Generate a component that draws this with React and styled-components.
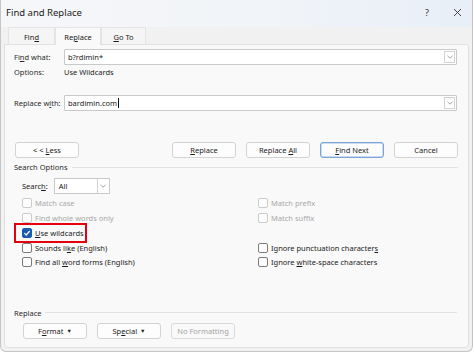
import React from 'react';
import styled, { createGlobalStyle, css } from 'styled-components';

const Global = createGlobalStyle`
  html, body { margin: 0; padding: 0; background: #ffffff; }
  body {
    width: 474px; height: 357px; overflow: hidden;
    font-family: "Noto Sans", "Open Sans", sans-serif;
    color: #1b1b1b;
  }
`;

const Window = styled.div`
  width: 473px;
  height: 352px;
  box-sizing: border-box;
  border: 1px solid #c6c6c6;
  border-top: none;
  border-radius: 0 0 6px 6px;
  background: #f1f1f1;
  display: flex;
  flex-direction: column;
  overflow: hidden;
`;

const TitleBar = styled.div`
  height: 27px;
  flex: none;
  display: flex;
  align-items: center;
  padding-left: 5px;
  background: linear-gradient(to right, #f6f7f9 0%, #f1f4f8 55%, #e8eff8 100%);
`;

const Title = styled.div`
  font-size: 9.5px;
  flex: 1;
  padding-bottom: 2px;
`;

const TitleBtn = styled.div`
  width: 30px;
  height: 24px;
  display: flex;
  align-items: center;
  justify-content: center;
  font-size: 9px;
  color: #333;
  padding-bottom: 3px;
`;

const TabStrip = styled.div`
  height: 17px;
  flex: none;
  display: flex;
  padding-left: 7px;
  background: #f1f1f1;
`;

const Tab = styled.div`
  width: ${p => p.w}px;
  box-sizing: border-box;
  text-align: center;
  line-height: 16px;
  font-size: 7.5px;
  padding-top: 1px;
  border: 1px solid #e4e4e4;
  border-bottom: none;
  background: ${p => (p.active ? '#f9f9f9' : '#f5f5f5')};
  margin-bottom: ${p => (p.active ? '-1px' : '0')};
  position: relative;
  z-index: ${p => (p.active ? 1 : 0)};
`;

const Panel = styled.div`
  flex: 1;
  margin: 0 3px 3px 3px;
  box-sizing: border-box;
  background: #f9f9f9;
  border: 1px solid #e0e0e0;
  border-radius: 0 3px 4px 4px;
  padding: 4px 11px 8px 9px;
  display: flex;
  flex-direction: column;
  font-size: 7.5px;
`;

const FieldRow = styled.div`
  display: flex;
  align-items: center;
  height: 16px;
  margin-top: ${p => p.mt || 0}px;
`;

const Label = styled.div`
  width: 50px;
  flex: none;
  color: #2a2a2a;
`;

const InfoRow = styled.div`
  display: flex;
  align-items: center;
  height: 14px;
`;

const Input = styled.div`
  flex: 1;
  height: 16px;
  box-sizing: border-box;
  border: 1px solid #c9c9c9;
  background: #fff;
  display: flex;
  align-items: center;
  padding-left: 3px;
  border-radius: 1px;
`;

const InputText = styled.span`
  flex: 1;
  display: flex;
  align-items: center;
`;

const Caret = styled.span`
  display: inline-block;
  width: 1px;
  height: 10px;
  background: #111;
  margin-left: 0.5px;
`;

const DropBtn = styled.div`
  width: 11px;
  height: 12px;
  box-sizing: border-box;
  border: 1px solid #d2d2d2;
  margin-right: 1px;
  display: flex;
  align-items: center;
  justify-content: center;
  background: #fff;
`;

const ButtonRow = styled.div`
  display: flex;
  justify-content: space-between;
  align-items: center;
  margin-top: ${p => p.mt || 0}px;
  margin-left: ${p => p.ml || 0}px;
  margin-right: ${p => p.mr || 0}px;
`;

const ButtonGroup = styled.div`
  display: flex;
  gap: ${p => p.gap || 10}px;
`;

const Button = styled.div`
  width: 64px;
  height: 16px;
  box-sizing: border-box;
  border: 1px solid #d3d3d3;
  border-radius: 3px;
  background: #fdfdfd;
  text-align: center;
  line-height: 14px;
  white-space: pre;
  color: #1b1b1b;
  ${p => p.primary && css`
    border-color: #7aa3d8;
    box-shadow: inset 0 0 0 0.5px #9dbbe3;
  `}
  ${p => p.disabled && css`
    color: #a3a3a3;
    border-color: #dadada;
    background: #f9f9f9;
  `}
`;

const SectionHeader = styled.div`
  display: flex;
  align-items: center;
  height: 14px;
  margin-top: ${p => p.mt || 0}px;
  margin-right: ${p => p.mr || 0}px;
  color: #2a2a2a;
  &::after {
    content: '';
    flex: 1;
    border-top: 1px solid #e2e2e2;
    margin-left: 4px;
  }
`;

const SearchRow = styled.div`
  display: flex;
  align-items: center;
  height: 16px;
  margin-top: 4px;
  margin-left: 8px;
`;

const Select = styled.div`
  width: 56px;
  height: 16px;
  box-sizing: border-box;
  border: 1px solid #c9c9c9;
  background: #fff;
  display: flex;
  align-items: stretch;
  margin-left: 6px;
`;

const SelectText = styled.div`
  flex: 1;
  display: flex;
  align-items: center;
  padding-left: 4px;
`;

const SelectArrow = styled.div`
  width: 11px;
  border-left: 1px solid #d2d2d2;
  display: flex;
  align-items: center;
  justify-content: center;
`;

const OptionsGrid = styled.div`
  display: grid;
  grid-template-columns: 236px 1fr;
  grid-auto-rows: 14.75px;
  margin-top: 2px;
  margin-left: 8px;
`;

const Check = styled.div`
  display: flex;
  align-items: center;
  gap: 3px;
  justify-self: start;
  grid-column: ${p => p.col};
  grid-row: ${p => p.row};
  color: ${p => (p.disabled ? '#a8a8a8' : '#1b1b1b')};
  ${p => p.highlight && css`
    margin: -3px -3px -3px -8px;
    padding: 1px 1px 1px 6px;
    border: 2px solid #e4000f;
  `}
`;

const Box = styled.span`
  width: 10px;
  height: 10px;
  box-sizing: border-box;
  border-radius: 2px;
  border: 1px solid ${p => (p.disabled ? '#cbcbcb' : '#7b7b7b')};
  background: ${p => (p.checked ? '#1a5cb3' : '#fdfdfd')};
  ${p => p.checked && css`border-color: #1a5cb3;`}
  display: flex;
  align-items: center;
  justify-content: center;
  flex: none;
`;

const U = styled.span`
  text-decoration: underline;
  text-underline-offset: 1px;
`;

const Tri = styled.span`
  font-size: 5.5px;
  margin-left: 3px;
  vertical-align: 1px;
`;

const Chevron = () => (
  <svg width="6" height="4" viewBox="0 0 6 4">
    <path d="M0.5 0.8 L3 3.2 L5.5 0.8" fill="none" stroke="#8a8a8a" strokeWidth="0.8" />
  </svg>
);

const CheckItem = ({ col, row, disabled, checked, highlight, children }) => (
  <Check col={col} row={row} disabled={disabled} highlight={highlight}>
    <Box disabled={disabled} checked={checked}>
      {checked && (
        <svg width="8" height="8" viewBox="0 0 8 8">
          <path d="M1.4 4.2 L3.2 6 L6.7 2" fill="none" stroke="#fff" strokeWidth="1.2" />
        </svg>
      )}
    </Box>
    <span>{children}</span>
  </Check>
);

export default function App() {
  return (
    <>
      <Global />
      <Window>
        <TitleBar>
          <Title>Find and Replace</Title>
          <TitleBtn>?</TitleBtn>
          <TitleBtn>
            <svg width="9" height="9" viewBox="0 0 9 9">
              <path d="M1 1 L8 8 M8 1 L1 8" stroke="#333" strokeWidth="0.9" />
            </svg>
          </TitleBtn>
        </TitleBar>
        <TabStrip>
          <Tab w={47}>Fin<U>d</U></Tab>
          <Tab w={46} active>Re<U>p</U>lace</Tab>
          <Tab w={45}><U>G</U>o To</Tab>
        </TabStrip>
        <Panel>
          <FieldRow>
            <Label>Fi<U>n</U>d what:</Label>
            <Input>
              <InputText>b?rdimin*</InputText>
              <DropBtn><Chevron /></DropBtn>
            </Input>
          </FieldRow>
          <InfoRow>
            <Label>Options:</Label>
            <span>Use Wildcards</span>
          </InfoRow>
          <FieldRow mt={16}>
            <Label>Replace w<U>i</U>th:</Label>
            <Input>
              <InputText>bardimin.com<Caret /></InputText>
              <DropBtn><Chevron /></DropBtn>
            </Input>
          </FieldRow>
          <ButtonRow mt={31} ml={1} mr={-1}>
            <Button>{'< < '}<U>L</U>ess</Button>
            <ButtonGroup gap={10}>
              <Button><U>R</U>eplace</Button>
              <Button>Replace <U>A</U>ll</Button>
              <Button primary><U>F</U>ind Next</Button>
              <Button>Cancel</Button>
            </ButtonGroup>
          </ButtonRow>
          <SectionHeader mt={2} mr={-1}>Search Options</SectionHeader>
          <SearchRow>
            <span>Searc<U>h</U>:</span>
            <Select>
              <SelectText>All</SelectText>
              <SelectArrow><Chevron /></SelectArrow>
            </Select>
          </SearchRow>
          <OptionsGrid>
            <CheckItem col={1} row={1} disabled>Match case</CheckItem>
            <CheckItem col={1} row={2} disabled>Find whole words only</CheckItem>
            <CheckItem col={1} row={3} checked highlight><U>U</U>se wildcards</CheckItem>
            <CheckItem col={1} row={4}>Sounds li<U>k</U>e (English)</CheckItem>
            <CheckItem col={1} row={5}>Find all <U>w</U>ord forms (English)</CheckItem>
            <CheckItem col={2} row={1} disabled>Match prefix</CheckItem>
            <CheckItem col={2} row={2} disabled>Match suffix</CheckItem>
            <CheckItem col={2} row={4}>Ignore punctuation character<U>s</U></CheckItem>
            <CheckItem col={2} row={5}>Ignore <U>w</U>hite-space characters</CheckItem>
          </OptionsGrid>
          <SectionHeader mt={36}>Replace</SectionHeader>
          <ButtonRow mt={3} ml={9}>
            <ButtonGroup gap={10}>
              <Button>F<U>o</U>rmat<Tri>▼</Tri></Button>
              <Button>Sp<U>e</U>cial<Tri>▼</Tri></Button>
              <Button disabled>No Formatting</Button>
            </ButtonGroup>
          </ButtonRow>
        </Panel>
      </Window>
    </>
  );
}
